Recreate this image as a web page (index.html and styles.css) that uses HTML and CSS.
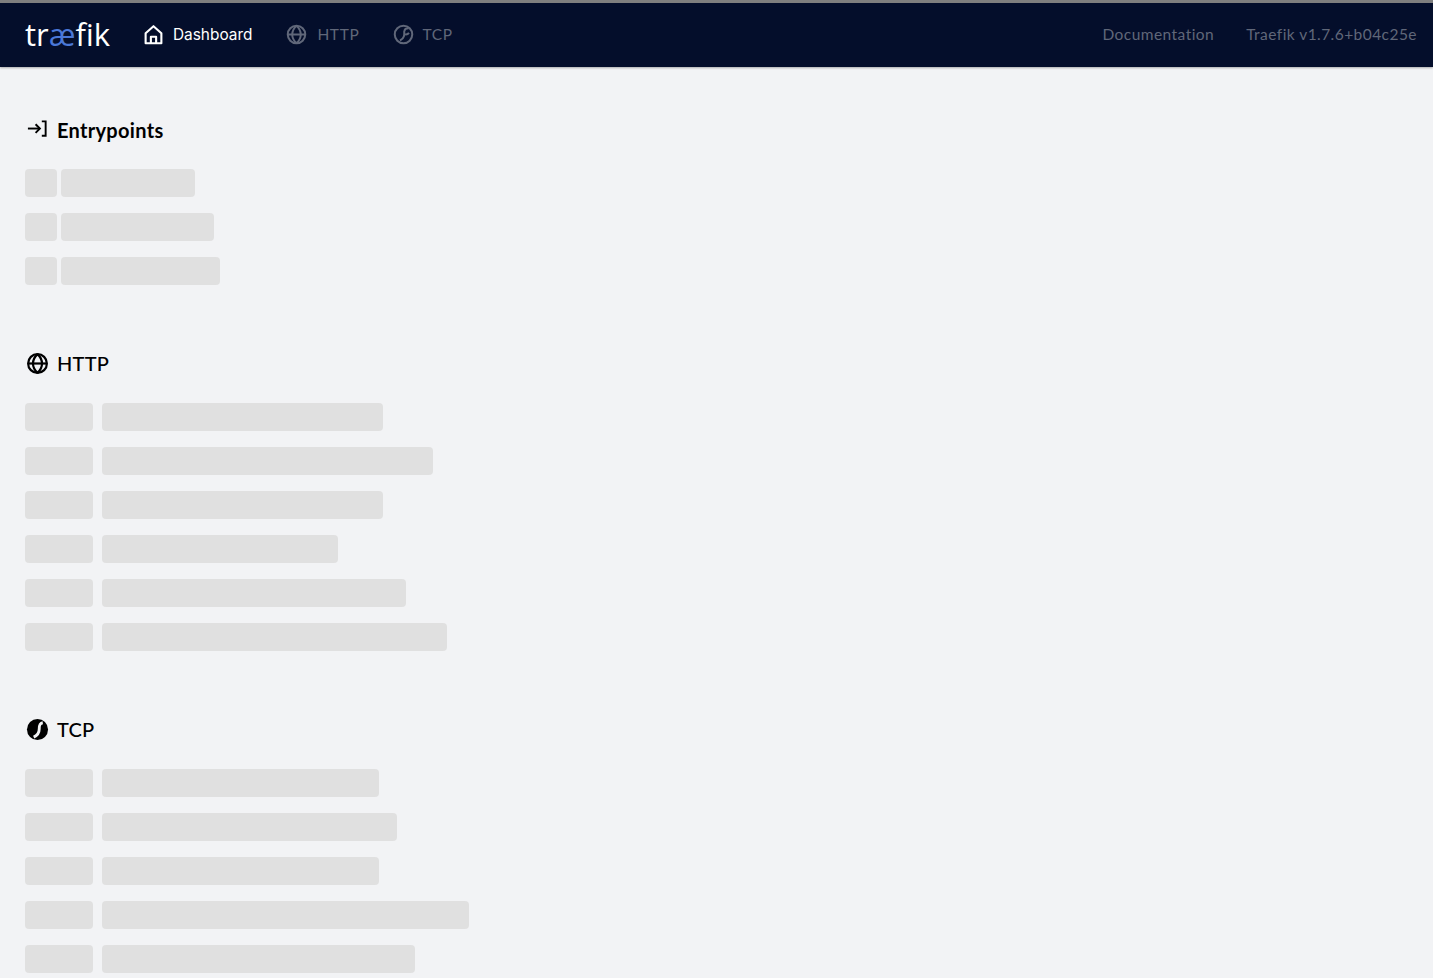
FILE: index.html
```html
<!DOCTYPE html>
<html lang="en">
<head>
<meta charset="utf-8">
<title>Traefik</title>
<link rel="stylesheet" href="styles.css">
</head>
<body>
<header class="navbar">
  <div class="brand">tr<span class="brand-ae">æ</span>fik</div>
  <nav class="nav-main">
    <a class="nav-item active">
      <svg class="nav-icon" viewBox="0 0 24 24" fill="none" stroke="currentColor" stroke-width="2.4" stroke-linejoin="round"><path d="M3 10.500 12 2.500l9 8V22H3z"/><path d="M9 22v-7.500h6V22"/></svg>
      <span>Dashboard</span>
    </a>
    <a class="nav-item">
      <svg class="nav-icon" viewBox="0 0 24 24" fill="none" stroke="currentColor" stroke-width="2.3"><circle cx="12" cy="12" r="10"/><path d="M2 12h20"/><path d="M12 2c-6.500 6-6.500 14 0 20M12 2c6.500 6 6.500 14 0 20"/></svg>
      <span>HTTP</span>
    </a>
    <a class="nav-item nav-item-tight">
      <svg class="nav-icon" viewBox="0 0 24 24" fill="none" stroke="currentColor" stroke-width="2.3"><circle cx="12" cy="12" r="10"/><path d="M18 4.800c-2.500-.2-4.500.7-5 3-.5 2 .3 3.700-.5 6.200-.7 2.500-2.500 4-4.500 4.800"/><path d="M12.800 11.500c2 .8 4 .5 5.500-1.300"/></svg>
      <span>TCP</span>
    </a>
  </nav>
  <div class="nav-side">
    <a class="nav-link">Documentation</a>
    <span class="nav-link">Traefik v1.7.6+b04c25e</span>
  </div>
</header>
<main class="content">
  <section class="section">
    <h2 class="section-title">
      <svg class="title-icon" viewBox="0 0 24 24" fill="none" stroke="currentColor" stroke-width="2"><path d="M2 11h12.500"/><path d="M10 6.500 14.500 11 10 15.500"/><path d="M16.500 3.500H20.500V18.500H16.500"/></svg>
      <span>Entrypoints</span>
    </h2>
    <div class="rows">
      <div class="row narrow"><div class="bone key"></div><div class="bone" style="width:134px"></div></div>
      <div class="row narrow"><div class="bone key"></div><div class="bone" style="width:153px"></div></div>
      <div class="row narrow"><div class="bone key"></div><div class="bone" style="width:159px"></div></div>
    </div>
  </section>
  <section class="section">
    <h2 class="section-title">
      <svg class="title-icon" viewBox="0 0 24 24" fill="none" stroke="currentColor" stroke-width="2.300"><circle cx="12" cy="12" r="9.800"/><path d="M2.200 12h19.600"/><path d="M12 2.200c-6.300 6-6.300 13.600 0 19.600M12 2.200c6.300 6 6.300 13.600 0 19.600"/></svg>
      <span class="title-light">HTTP</span>
    </h2>
    <div class="rows">
      <div class="row"><div class="bone tag"></div><div class="bone" style="width:281px"></div></div>
      <div class="row"><div class="bone tag"></div><div class="bone" style="width:331px"></div></div>
      <div class="row"><div class="bone tag"></div><div class="bone" style="width:281px"></div></div>
      <div class="row"><div class="bone tag"></div><div class="bone" style="width:236px"></div></div>
      <div class="row"><div class="bone tag"></div><div class="bone" style="width:304px"></div></div>
      <div class="row"><div class="bone tag"></div><div class="bone" style="width:345px"></div></div>
    </div>
  </section>
  <section class="section">
    <h2 class="section-title">
      <svg class="title-icon" viewBox="0 0 24 24"><circle cx="12" cy="12" r="11" fill="currentColor"/><path d="M17.500 5C14 5.500 13.800 8 13.800 11.500S12.500 18 8 20" fill="none" stroke="#f2f3f5" stroke-width="3"/></svg>
      <span class="title-light">TCP</span>
    </h2>
    <div class="rows">
      <div class="row"><div class="bone tag"></div><div class="bone" style="width:277px"></div></div>
      <div class="row"><div class="bone tag"></div><div class="bone" style="width:295px"></div></div>
      <div class="row"><div class="bone tag"></div><div class="bone" style="width:277px"></div></div>
      <div class="row"><div class="bone tag"></div><div class="bone" style="width:367px"></div></div>
      <div class="row"><div class="bone tag"></div><div class="bone" style="width:313px"></div></div>
    </div>
  </section>
</main>
</body>
</html>
```
FILE: styles.css
```css
* { box-sizing: border-box; }
html, body { height: 100%; }
body {
  margin: 0;
  background: #f2f3f5;
  color: #000;
  font-family: "Lato", "Open Sans", sans-serif;
  overflow: hidden;
}
.navbar {
  height: 67px;
  border-top: 3px solid #7f7f7f;
  background: #040e2b;
  display: flex;
  align-items: center;
  padding: 0 16px 2px 25px;
  box-shadow: 0 1px 2px rgba(0,0,0,.3);
}
.brand {
  color: #fff;
  font-family: "Open Sans", sans-serif;
  font-size: 31px;
  font-weight: 400;
  line-height: 1;
  width: 85px;
  white-space: nowrap;
}
.brand-ae { color: #4a78d8; }
.nav-main {
  display: flex;
  align-items: center;
  margin-left: 33px;
  gap: 34px;
}
.nav-item {
  display: flex;
  align-items: center;
  gap: 10px;
  font-size: 15.500px;
  color: #606779;
  letter-spacing: .65px;
}
.nav-item-tight { gap: 8px; }
.nav-item.active {
  gap: 9px;
  color: #fff;
  font-family: "Inter", sans-serif;
  font-size: 15.400px;
  letter-spacing: 0;
}
.nav-icon { width: 21px; height: 21px; flex: none; }
.nav-side {
  margin-left: auto;
  display: flex;
  align-items: center;
  gap: 32px;
}
.nav-link {
  color: #606779;
  font-size: 15.500px;
  letter-spacing: .45px;
}
.content { padding: 50px 25px 0; }
.section { margin-bottom: 66px; }
.section:last-child { margin-bottom: 0; }
.section-title {
  margin: 0 0 26px;
  height: 26px;
  display: flex;
  align-items: center;
  gap: 8px;
  font-size: 20px;
  font-weight: 700;
  line-height: 26px;
  letter-spacing: .3px;
}
.title-icon { width: 23px; height: 23px; flex: none; margin: -2px 0 0 1px; }
.title-light { font-weight: 500; letter-spacing: .25px; padding-bottom: 2px; }
.rows { display: flex; flex-direction: column; gap: 16px; }
.row { display: flex; gap: 9px; height: 28px; }
.row.narrow { gap: 4px; }
.bone { height: 28px; background: #e0e0e0; border-radius: 4px; }
.key { width: 32px; }
.tag { width: 68px; }
```
